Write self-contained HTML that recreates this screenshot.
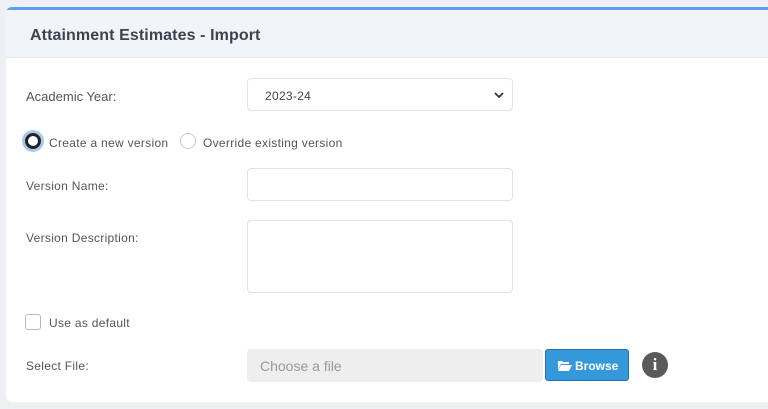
<!DOCTYPE html>
<html><head><style>
*{box-sizing:border-box;margin:0;padding:0}
body{width:768px;height:409px;background:#eef0f4;font-family:"Liberation Sans",sans-serif;position:relative;overflow:hidden;color:#555}
.card{position:absolute;left:6px;top:7px;width:800px;height:395px;background:#fff;border-top:3px solid #5b9ff0;border-radius:6px 0 0 6px}
.hdr{position:absolute;left:0;top:0;right:0;height:48px;background:#f1f4f9;border-bottom:1px solid #e6e9ef}
.hdr span{position:absolute;left:24px;top:17px;font-size:16px;font-weight:bold;color:#3d4350;letter-spacing:0.1px}
.lbl{position:absolute;font-size:12px;color:#555;letter-spacing:0.3px}
.inp{position:absolute;background:#fff;border:1px solid #e3e3e3;border-radius:4px}
.abs{position:absolute}
</style></head><body>
<div class="card">
<div class="hdr"><span>Attainment Estimates - Import</span></div>
</div>
<div class="lbl" style="left:26px;top:89px;font-size:13px;letter-spacing:0">Academic Year:</div>
<div class="inp" style="left:247px;top:78px;width:266px;height:33px">
<span class="abs" style="left:17px;top:10px;font-size:12px;color:#444;letter-spacing:0.3px">2023-24</span>
<svg class="abs" style="right:8px;top:12px" width="10" height="8" viewBox="0 0 10 8"><path d="M1 2l4 4 4-4" fill="none" stroke="#333" stroke-width="1.8"/></svg>
</div>
<div class="abs" style="left:25px;top:133px;width:16px;height:16px;border-radius:50%;border:3px solid #222;box-shadow:0 0 0 3px #a9c8f0;background:#fff"></div>
<div class="lbl" style="left:49px;top:136px">Create a new version</div>
<div class="abs" style="left:180px;top:133px;width:16px;height:16px;border-radius:50%;border:1px solid #ccc;background:#fff"></div>
<div class="lbl" style="left:203px;top:136px">Override existing version</div>
<div class="lbl" style="left:26px;top:179px">Version Name:</div>
<div class="inp" style="left:247px;top:168px;width:266px;height:33px"></div>
<div class="lbl" style="left:26px;top:231px">Version Description:</div>
<div class="inp" style="left:247px;top:220px;width:266px;height:73px"></div>
<div class="abs" style="left:25px;top:314px;width:16px;height:16px;border-radius:3px;border:1px solid #bbb;background:#fff"></div>
<div class="lbl" style="left:49px;top:316px">Use as default</div>
<div class="lbl" style="left:26px;top:359px">Select File:</div>
<div class="abs" style="left:247px;top:349px;width:296px;height:33px;background:#eeeeee;border-radius:4px">
<span class="abs" style="left:13px;top:9px;font-size:14px;color:#999">Choose a file</span></div>
<div class="abs" style="left:545px;top:349px;width:84px;height:32px;background:#3498db;border:1px solid #2a6fa8;border-radius:3px;color:#fff;font-size:12px;font-weight:bold">
<svg class="abs" style="left:12px;top:10px" width="14" height="11" viewBox="0 0 14 11"><path d="M0 1h4l1 1h6v2H3L0 10z" fill="#fff"/><path d="M3 5h11l-3 6H0z" fill="#fff"/></svg>
<span class="abs" style="left:29px;top:9px">Browse</span></div>
<div class="abs" style="left:642px;top:352px;width:26px;height:26px;border-radius:50%;background:#5a5a5a;color:#fff;font:bold 17px 'Liberation Serif',serif;text-align:center;line-height:26px">i</div>
</body></html>
